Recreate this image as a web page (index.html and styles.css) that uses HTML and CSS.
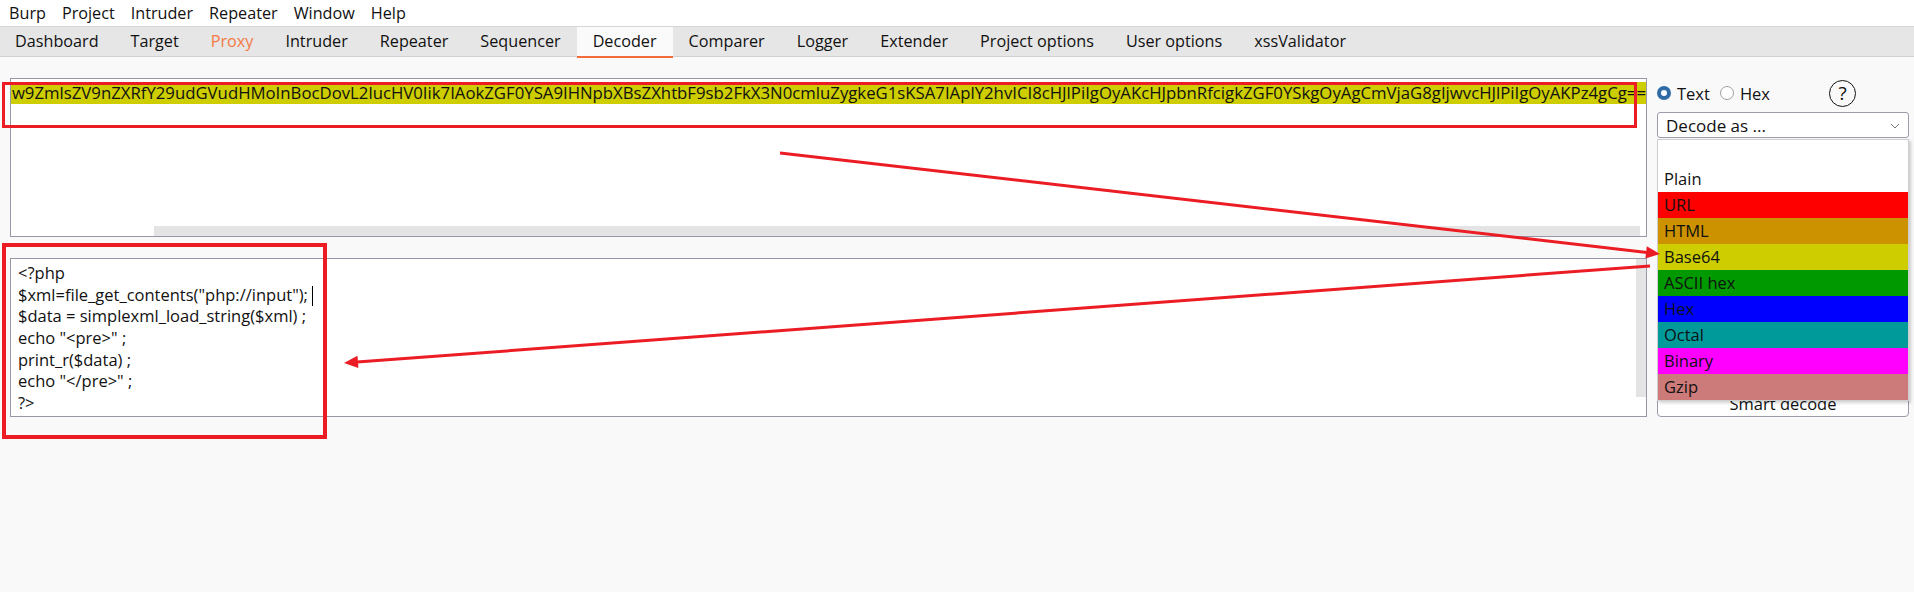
FILE: index.html
```html
<!DOCTYPE html>
<html lang="en">
<head>
<meta charset="utf-8">
<title>Burp Suite - Decoder</title>
<link rel="stylesheet" href="styles.css">
</head>
<body>
<nav class="menubar">
  <span class="menu-item">Burp</span>
  <span class="menu-item">Project</span>
  <span class="menu-item">Intruder</span>
  <span class="menu-item">Repeater</span>
  <span class="menu-item">Window</span>
  <span class="menu-item">Help</span>
</nav>
<div class="tabbar">
  <span class="tab tab-first">Dashboard</span>
  <span class="tab">Target</span>
  <span class="tab tab-proxy">Proxy</span>
  <span class="tab">Intruder</span>
  <span class="tab">Repeater</span>
  <span class="tab">Sequencer</span>
  <span class="tab tab-active">Decoder</span>
  <span class="tab">Comparer</span>
  <span class="tab">Logger</span>
  <span class="tab">Extender</span>
  <span class="tab">Project options</span>
  <span class="tab">User options</span>
  <span class="tab">xssValidator</span>
</div>
<main class="content">
  <section class="panel">
    <div class="editor editor-top">
      <div class="b64line"><span class="b64text">w9ZmlsZV9nZXRfY29udGVudHMoInBocDovL2lucHV0Iik7IAokZGF0YSA9IHNpbXBsZXhtbF9sb2FkX3N0cmluZygkeG1sKSA7IAplY2hvICI8cHJlPiIgOyAKcHJpbnRfcigkZGF0YSkgOyAgCmVjaG8gIjwvcHJlPiIgOyAKPz4gCg==</span></div>
      <div class="hscroll"><div class="hthumb"></div></div>
    </div>
    <div class="controls">
      <div class="modes">
        <span class="radio"><span class="dot dot-on"></span>Text</span>
        <span class="radio"><span class="dot"></span>Hex</span>
        <span class="help">?</span>
      </div>
      <div class="select-wrap">
        <div class="select">
          <span>Decode as ...</span>
          <svg class="chevron" width="10" height="6" viewBox="0 0 10 6"><polyline points="1,1 5,5 9,1" fill="none" stroke="#777" stroke-width="1"/></svg>
        </div>
        <ul class="dropdown">
          <li class="opt"></li>
          <li class="opt">Plain</li>
          <li class="opt opt-url">URL</li>
          <li class="opt opt-html">HTML</li>
          <li class="opt opt-b64">Base64</li>
          <li class="opt opt-ascii">ASCII hex</li>
          <li class="opt opt-hex">Hex</li>
          <li class="opt opt-octal">Octal</li>
          <li class="opt opt-binary">Binary</li>
          <li class="opt opt-gzip">Gzip</li>
        </ul>
      </div>
    </div>
  </section>
  <section class="panel">
    <div class="editor editor-bottom">
      <div class="code">
        <div class="line">&lt;?php</div>
        <div class="line">$xml=file_get_contents("php://input"); <span class="caret"></span></div>
        <div class="line">$data = simplexml_load_string($xml) ;</div>
        <div class="line">echo "&lt;pre&gt;" ;</div>
        <div class="line">print_r($data) ;</div>
        <div class="line">echo "&lt;/pre&gt;" ;</div>
        <div class="line">?&gt;</div>
      </div>
      <div class="vscroll"></div>
    </div>
    <div class="controls controls-bottom">
      <div class="button">Smart decode</div>
    </div>
  </section>
</main>
<div class="mark mark-top"></div>
<div class="mark mark-code"></div>
<svg class="arrows" width="1914" height="592" viewBox="0 0 1914 592">
  <line x1="780" y1="153" x2="1647" y2="252.4" stroke="#ec1c24" stroke-width="3"/>
  <polygon points="1660,254 1645.4,258.6 1646.8,246.2" fill="#ec1c24"/>
  <line x1="1650" y1="266" x2="357" y2="362" stroke="#ec1c24" stroke-width="3"/>
  <polygon points="344,363 357.5,355.8 358.4,368.1" fill="#ec1c24"/>
</svg>
</body>
</html>
```
FILE: styles.css
```css
* { box-sizing: border-box; }
html, body { margin: 0; padding: 0; }
body {
  position: relative;
  width: 1914px;
  height: 592px;
  overflow: hidden;
  background: #f9f9f9;
  font-family: "Open Sans", "Noto Sans", sans-serif;
  font-size: 16.2px;
  color: #111;
}
.menubar {
  display: flex;
  height: 27px;
  padding-left: 1px;
  background: #ffffff;
  border-bottom: 1px solid #d6d6d6;
}
.menu-item {
  padding: 0 8px;
  line-height: 26px;
}
.tabbar {
  display: flex;
  height: 30px;
  background: #e6e6e6;
  border-bottom: 1px solid #d2d2d2;
}
.tab {
  padding: 0 16px;
  line-height: 29px;
}
.tab-first { padding-left: 15px; }
.tab-proxy { color: #f47a45; }
.tab-active {
  background: #fafafa;
  border-bottom: 2px solid #f26b3a;
  line-height: 27px;
  height: 31px;
  padding-top: 1px;
}
.content {
  padding: 21px 5px 0 10px;
  display: flex;
  flex-direction: column;
  gap: 21px;
}
.panel {
  display: flex;
  gap: 10px;
  height: 159px;
}
.editor {
  flex: 1;
  min-width: 0;
  background: #ffffff;
  border: 1px solid #9797a7;
}
.editor-top {
  display: flex;
  flex-direction: column;
  padding-top: 3px;
}
.b64line {
  display: flex;
  justify-content: flex-end;
  overflow: hidden;
  white-space: nowrap;
  height: 22px;
  line-height: 22px;
  background: #cdcd00;
  font-size: 16.75px;
}
.b64text { flex: none; }
.hscroll {
  margin-top: auto;
  height: 10px;
  display: flex;
}
.hthumb {
  margin-left: 143px;
  margin-right: 6px;
  flex: 1;
  background: #e4e4e4;
}
.editor-bottom {
  display: flex;
}
.code {
  flex: 1;
  padding: 3px 0 0 7px;
  font-size: 16.5px;
}
.line {
  height: 21.7px;
  line-height: 21.7px;
  white-space: pre;
}
.caret {
  display: inline-block;
  width: 1px;
  height: 20px;
  background: #000;
  vertical-align: middle;
}
.vscroll {
  width: 10px;
  height: 138px;
  background: #e4e4e4;
}
.controls {
  width: 252px;
  flex: none;
  display: flex;
  flex-direction: column;
}
.modes {
  display: flex;
  align-items: center;
  height: 30px;
}
.radio {
  display: flex;
  align-items: center;
  gap: 6px;
  margin-right: 10px;
  font-size: 16.5px;
}
.dot {
  width: 14px;
  height: 14px;
  border-radius: 50%;
  border: 1px solid #a0a0a0;
  background: #fff;
}
.dot-on {
  border: 4px solid #2f6ca6;
}
.help {
  margin-left: auto;
  margin-right: 53px;
  width: 27px;
  height: 27px;
  border: 1.6px solid #111;
  border-radius: 50%;
  display: flex;
  align-items: center;
  justify-content: center;
  font-size: 19px;
  line-height: 1;
}
.select-wrap {
  position: relative;
  margin-top: 4px;
}
.select {
  display: flex;
  align-items: center;
  justify-content: space-between;
  height: 26px;
  padding: 0 8px 0 8px;
  background: #fff;
  border: 1px solid #9b9bab;
  border-radius: 3px;
  font-size: 17px;
}
.chevron { margin-top: 2px; }
.dropdown {
  position: absolute;
  top: 27px;
  left: 0;
  width: 252px;
  margin: 0;
  padding: 0;
  list-style: none;
  background: #fff;
  border: 1px solid #cfcfcf;
  box-shadow: 2px 2px 3px rgba(0,0,0,0.18);
  z-index: 5;
}
.opt {
  height: 26px;
  line-height: 26px;
  padding-left: 6px;
  font-size: 16.5px;
  color: #111;
}
.opt-url { background: #ff0000; }
.opt-html { background: #cc9200; }
.opt-b64 { background: #cdcd00; }
.opt-ascii { background: #009900; }
.opt-hex { background: #0000ff; }
.opt-octal { background: #009a9a; }
.opt-binary { background: #ff00ff; }
.opt-gzip { background: #cc7a7a; }
.controls-bottom {
  justify-content: flex-end;
}
.button {
  height: 26px;
  line-height: 24px;
  text-align: center;
  background: #fff;
  border: 1px solid #9b9bab;
  border-radius: 4px;
  font-size: 16.5px;
}
.mark {
  position: absolute;
  border: 3px solid #ec1c24;
  z-index: 8;
}
.mark-top {
  left: 2px;
  top: 82px;
  width: 1635px;
  height: 46px;
}
.mark-code {
  left: 2px;
  top: 243px;
  width: 325px;
  height: 196px;
  border-width: 4px;
}
.arrows {
  position: absolute;
  left: 0;
  top: 0;
  z-index: 9;
  pointer-events: none;
}
```
